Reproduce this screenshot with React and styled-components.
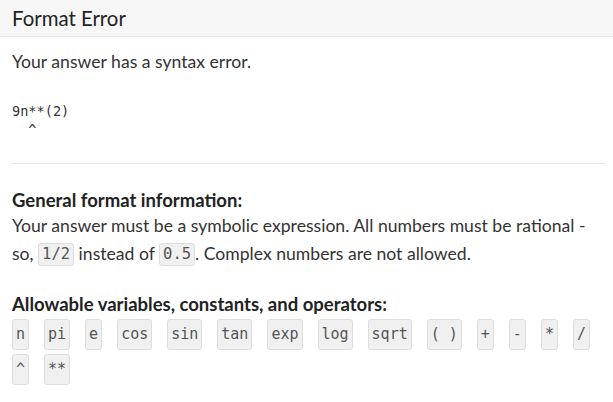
import React from 'react';
import styled, { createGlobalStyle } from 'styled-components';

const GlobalStyle = createGlobalStyle`
  body {
    margin: 0;
    background: #fff;
    font-family: Lato, "Noto Sans", sans-serif;
    color: #333;
  }
`;

const Container = styled.div`
  width: 613px;
  height: 402px;
  overflow: hidden;
  background: #fff;
`;

const Header = styled.div`
  height: 37px;
  box-sizing: border-box;
  background: #f7f7f7;
  border-bottom: 1px solid #e8e8e8;
  padding: 0 12px;
  display: flex;
  align-items: center;
`;

const Title = styled.h3`
  margin: 0;
  font-size: 20.4px;
  font-weight: 400;
  color: #222;
`;

const Body = styled.div`
  padding: 13px 8px 0 12px;
`;

const Message = styled.p`
  margin: 0;
  font-size: 17.6px;
  line-height: 24px;
`;

const CodeBlock = styled.pre`
  margin: 28px 0 0;
  font-family: "DejaVu Sans Mono", monospace;
  font-size: 13.6px;
  line-height: 19px;
  color: #333;
`;

const Rule = styled.hr`
  margin: 23px 0 0;
  border: 0;
  border-top: 1px solid #e6e6e6;
`;

const SectionTitle = styled.div`
  margin-top: ${props => props.top || 24}px;
  font-size: 18.5px;
  font-weight: 700;
  color: #222;
  line-height: 24px;
`;

const Paragraph = styled.p`
  margin: 0;
  font-size: 17.6px;
  line-height: 28px;
`;

const InlineCode = styled.code`
  display: inline-block;
  font-family: "DejaVu Sans Mono", monospace;
  font-size: 15.5px;
  line-height: 19px;
  color: #555;
  background: #f0f0f0;
  border: 1px solid #ddd;
  border-radius: 3px;
  padding: 1px 3px;
  vertical-align: 1px;
`;

const Chips = styled.div`
  display: flex;
  flex-wrap: wrap;
  column-gap: 15px;
  row-gap: 4px;
  margin-top: 3px;
`;

const Chip = styled.code`
  display: inline-block;
  font-family: "DejaVu Sans Mono", monospace;
  font-size: 15px;
  line-height: 23px;
  color: #555;
  background: #f0f0f0;
  border: 1px solid #ddd;
  border-radius: 3px;
  padding: 3px 3px;
  white-space: pre;
`;

const operators = ['n', 'pi', 'e', 'cos', 'sin', 'tan', 'exp', 'log', 'sqrt', '( )', '+', '-', '*', '/', '^', '**'];

export default function App() {
  return (
    <Container>
      <GlobalStyle />
      <Header>
        <Title>Format Error</Title>
      </Header>
      <Body>
        <Message>Your answer has a syntax error.</Message>
        <CodeBlock>{'9n**(2)\n  ^'}</CodeBlock>
        <Rule />
        <SectionTitle top={24}>General format information:</SectionTitle>
        <Paragraph>
          Your answer must be a symbolic expression. All numbers must be rational - so, <InlineCode>1/2</InlineCode> instead of <InlineCode>0.5</InlineCode>. Complex numbers are not allowed.
        </Paragraph>
        <SectionTitle top={24}>Allowable variables, constants, and operators:</SectionTitle>
        <Chips>
          {operators.map(op => (
            <Chip key={op}>{op}</Chip>
          ))}
        </Chips>
      </Body>
    </Container>
  );
}
